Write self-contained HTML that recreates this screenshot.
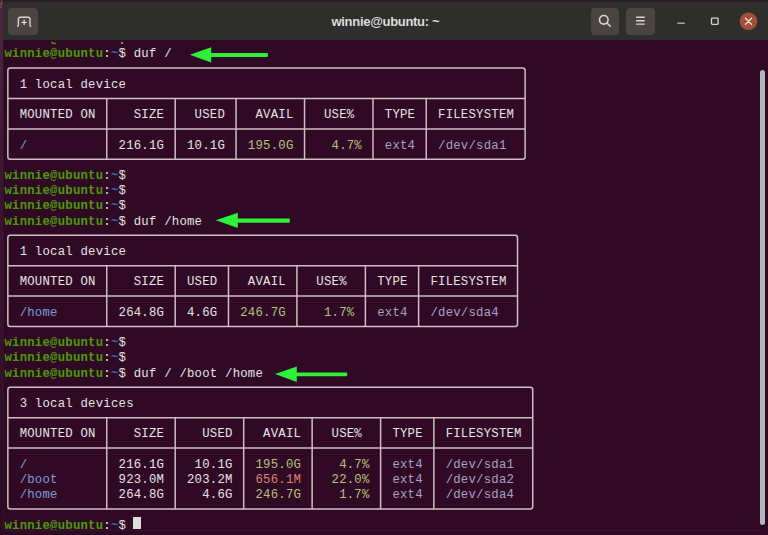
<!DOCTYPE html>
<html><head><meta charset="utf-8"><style>
html,body{margin:0;padding:0;width:768px;height:535px;overflow:hidden;background:#300a24}
#w{position:absolute;left:0;top:0;width:768px;height:535px;overflow:hidden;background:#300a24}
.t{position:absolute;font-family:"Liberation Mono",monospace;font-size:12.3px;letter-spacing:0.227px;line-height:15.2px;height:15.2px;white-space:pre}
.b{font-weight:bold}
.hl{position:absolute;height:1.5px;background:#cdbec3}
.vl{position:absolute;width:1.5px;background:#cdbec3}
.box{position:absolute;box-sizing:border-box;border:1.5px solid #cdbec3;border-radius:3px}
.hb{position:absolute;top:8px;height:27px;background:#4a4542;border-radius:4px}
</style></head><body><div id="w">
<div style="position:absolute;left:760.3px;top:69.8px;width:5.2px;height:455px;background:#b5b6b8;border-radius:3px"></div>
<svg style="position:absolute;left:0;top:0" width="768" height="535" viewBox="0 0 768 535"><g fill="none" stroke="#cdbec3" stroke-width="1.5"><rect x="7.85" y="68.10" width="517.28" height="91.20" rx="2.5"/><path d="M7.85 98.50H525.13"/><path d="M7.85 128.90H525.13"/><path d="M106.74 98.50V159.30"/><path d="M175.21 98.50V159.30"/><path d="M236.06 98.50V159.30"/><path d="M304.53 98.50V159.30"/><path d="M372.99 98.50V159.30"/><path d="M426.24 98.50V159.30"/><rect x="7.85" y="235.30" width="509.67" height="91.20" rx="2.5"/><path d="M7.85 265.70H517.52"/><path d="M7.85 296.10H517.52"/><path d="M106.74 265.70V326.50"/><path d="M175.21 265.70V326.50"/><path d="M228.46 265.70V326.50"/><path d="M296.92 265.70V326.50"/><path d="M365.38 265.70V326.50"/><path d="M418.63 265.70V326.50"/><rect x="7.85" y="387.30" width="524.88" height="121.60" rx="2.5"/><path d="M7.85 417.70H532.74"/><path d="M7.85 448.10H532.74"/><path d="M106.74 417.70V508.90"/><path d="M175.21 417.70V508.90"/><path d="M243.67 417.70V508.90"/><path d="M312.13 417.70V508.90"/><path d="M380.60 417.70V508.90"/><path d="M433.85 417.70V508.90"/></g></svg>
<div class="t b" style="left:4.45px;top:47.30px;color:#4e9a06">winnie@ubuntu</div><div class="t" style="left:103.34px;top:47.30px;color:#e6e3e6">:</div><div class="t b" style="left:110.95px;top:47.30px;color:#3f68b0">~</div><div class="t" style="left:118.56px;top:47.30px;color:#e6e3e6">$ duf /</div><div class="t" style="left:19.66px;top:77.70px;color:#e6e3e6">1 local device</div><div class="t" style="left:19.66px;top:108.10px;color:#e6e3e6">MOUNTED ON</div><div class="t" style="left:133.77px;top:108.10px;color:#e6e3e6">SIZE</div><div class="t" style="left:194.62px;top:108.10px;color:#e6e3e6">USED</div><div class="t" style="left:255.48px;top:108.10px;color:#e6e3e6">AVAIL</div><div class="t" style="left:323.94px;top:108.10px;color:#e6e3e6">USE%</div><div class="t" style="left:384.80px;top:108.10px;color:#e6e3e6">TYPE</div><div class="t" style="left:438.05px;top:108.10px;color:#e6e3e6">FILESYSTEM</div><div class="t" style="left:19.66px;top:138.50px;color:#7f9bd9">/</div><div class="t" style="left:118.56px;top:138.50px;color:#e6e3e6">216.1G</div><div class="t" style="left:187.02px;top:138.50px;color:#e6e3e6">10.1G</div><div class="t" style="left:247.87px;top:138.50px;color:#b4c27e">195.0G</div><div class="t" style="left:331.55px;top:138.50px;color:#b4c27e">4.7%</div><div class="t" style="left:384.80px;top:138.50px;color:#a6a3c6">ext4</div><div class="t" style="left:438.05px;top:138.50px;color:#a6a3c6">/dev/sda1</div><div class="t b" style="left:4.45px;top:168.90px;color:#4e9a06">winnie@ubuntu</div><div class="t" style="left:103.34px;top:168.90px;color:#e6e3e6">:</div><div class="t b" style="left:110.95px;top:168.90px;color:#3f68b0">~</div><div class="t" style="left:118.56px;top:168.90px;color:#e6e3e6">$</div><div class="t b" style="left:4.45px;top:184.10px;color:#4e9a06">winnie@ubuntu</div><div class="t" style="left:103.34px;top:184.10px;color:#e6e3e6">:</div><div class="t b" style="left:110.95px;top:184.10px;color:#3f68b0">~</div><div class="t" style="left:118.56px;top:184.10px;color:#e6e3e6">$</div><div class="t b" style="left:4.45px;top:199.30px;color:#4e9a06">winnie@ubuntu</div><div class="t" style="left:103.34px;top:199.30px;color:#e6e3e6">:</div><div class="t b" style="left:110.95px;top:199.30px;color:#3f68b0">~</div><div class="t" style="left:118.56px;top:199.30px;color:#e6e3e6">$</div><div class="t b" style="left:4.45px;top:214.50px;color:#4e9a06">winnie@ubuntu</div><div class="t" style="left:103.34px;top:214.50px;color:#e6e3e6">:</div><div class="t b" style="left:110.95px;top:214.50px;color:#3f68b0">~</div><div class="t" style="left:118.56px;top:214.50px;color:#e6e3e6">$ duf /home</div><div class="t" style="left:19.66px;top:244.90px;color:#e6e3e6">1 local device</div><div class="t" style="left:19.66px;top:275.30px;color:#e6e3e6">MOUNTED ON</div><div class="t" style="left:133.77px;top:275.30px;color:#e6e3e6">SIZE</div><div class="t" style="left:187.02px;top:275.30px;color:#e6e3e6">USED</div><div class="t" style="left:247.87px;top:275.30px;color:#e6e3e6">AVAIL</div><div class="t" style="left:316.34px;top:275.30px;color:#e6e3e6">USE%</div><div class="t" style="left:377.19px;top:275.30px;color:#e6e3e6">TYPE</div><div class="t" style="left:430.44px;top:275.30px;color:#e6e3e6">FILESYSTEM</div><div class="t" style="left:19.66px;top:305.70px;color:#7f9bd9">/home</div><div class="t" style="left:118.56px;top:305.70px;color:#e6e3e6">264.8G</div><div class="t" style="left:187.02px;top:305.70px;color:#e6e3e6">4.6G</div><div class="t" style="left:240.27px;top:305.70px;color:#b4c27e">246.7G</div><div class="t" style="left:323.94px;top:305.70px;color:#b4c27e">1.7%</div><div class="t" style="left:377.19px;top:305.70px;color:#a6a3c6">ext4</div><div class="t" style="left:430.44px;top:305.70px;color:#a6a3c6">/dev/sda4</div><div class="t b" style="left:4.45px;top:336.10px;color:#4e9a06">winnie@ubuntu</div><div class="t" style="left:103.34px;top:336.10px;color:#e6e3e6">:</div><div class="t b" style="left:110.95px;top:336.10px;color:#3f68b0">~</div><div class="t" style="left:118.56px;top:336.10px;color:#e6e3e6">$</div><div class="t b" style="left:4.45px;top:351.30px;color:#4e9a06">winnie@ubuntu</div><div class="t" style="left:103.34px;top:351.30px;color:#e6e3e6">:</div><div class="t b" style="left:110.95px;top:351.30px;color:#3f68b0">~</div><div class="t" style="left:118.56px;top:351.30px;color:#e6e3e6">$</div><div class="t b" style="left:4.45px;top:366.50px;color:#4e9a06">winnie@ubuntu</div><div class="t" style="left:103.34px;top:366.50px;color:#e6e3e6">:</div><div class="t b" style="left:110.95px;top:366.50px;color:#3f68b0">~</div><div class="t" style="left:118.56px;top:366.50px;color:#e6e3e6">$ duf / /boot /home</div><div class="t" style="left:19.66px;top:396.90px;color:#e6e3e6">3 local devices</div><div class="t" style="left:19.66px;top:427.30px;color:#e6e3e6">MOUNTED ON</div><div class="t" style="left:133.77px;top:427.30px;color:#e6e3e6">SIZE</div><div class="t" style="left:202.23px;top:427.30px;color:#e6e3e6">USED</div><div class="t" style="left:263.09px;top:427.30px;color:#e6e3e6">AVAIL</div><div class="t" style="left:331.55px;top:427.30px;color:#e6e3e6">USE%</div><div class="t" style="left:392.41px;top:427.30px;color:#e6e3e6">TYPE</div><div class="t" style="left:445.66px;top:427.30px;color:#e6e3e6">FILESYSTEM</div><div class="t" style="left:19.66px;top:457.70px;color:#7f9bd9">/</div><div class="t" style="left:118.56px;top:457.70px;color:#e6e3e6">216.1G</div><div class="t" style="left:194.62px;top:457.70px;color:#e6e3e6">10.1G</div><div class="t" style="left:255.48px;top:457.70px;color:#b4c27e">195.0G</div><div class="t" style="left:339.16px;top:457.70px;color:#b4c27e">4.7%</div><div class="t" style="left:392.41px;top:457.70px;color:#a6a3c6">ext4</div><div class="t" style="left:445.66px;top:457.70px;color:#a6a3c6">/dev/sda1</div><div class="t" style="left:19.66px;top:472.90px;color:#7f9bd9">/boot</div><div class="t" style="left:118.56px;top:472.90px;color:#e6e3e6">923.0M</div><div class="t" style="left:187.02px;top:472.90px;color:#e6e3e6">203.2M</div><div class="t" style="left:255.48px;top:472.90px;color:#d98572">656.1M</div><div class="t" style="left:331.55px;top:472.90px;color:#b4c27e">22.0%</div><div class="t" style="left:392.41px;top:472.90px;color:#a6a3c6">ext4</div><div class="t" style="left:445.66px;top:472.90px;color:#a6a3c6">/dev/sda2</div><div class="t" style="left:19.66px;top:488.10px;color:#7f9bd9">/home</div><div class="t" style="left:118.56px;top:488.10px;color:#e6e3e6">264.8G</div><div class="t" style="left:202.23px;top:488.10px;color:#e6e3e6">4.6G</div><div class="t" style="left:255.48px;top:488.10px;color:#b4c27e">246.7G</div><div class="t" style="left:339.16px;top:488.10px;color:#b4c27e">1.7%</div><div class="t" style="left:392.41px;top:488.10px;color:#a6a3c6">ext4</div><div class="t" style="left:445.66px;top:488.10px;color:#a6a3c6">/dev/sda4</div><div class="t b" style="left:4.45px;top:518.50px;color:#4e9a06">winnie@ubuntu</div><div class="t" style="left:103.34px;top:518.50px;color:#e6e3e6">:</div><div class="t b" style="left:110.95px;top:518.50px;color:#3f68b0">~</div><div class="t" style="left:118.56px;top:518.50px;color:#e6e3e6">$ </div>
<div style="position:absolute;left:133.3px;top:516.7px;width:8px;height:12px;background:#dcdcdc"></div>
<svg style="position:absolute;left:0;top:0" width="200" height="50"><path d="M51.3 42.2 Q53 43.9 56.2 43.4" stroke="#4e9a06" stroke-width="1.4" fill="none"/><rect x="121.3" y="42.2" width="1.6" height="1.6" fill="#cfcad6"/></svg>
<div style="position:absolute;left:4px;top:530px;width:756px;height:1px;background:#34162c"></div>
<svg style="position:absolute;left:0;top:0" width="768" height="535" viewBox="0 0 768 535"><g fill="#2ef038"><polygon points="189.8,54.7 211.2,47.2 211.2,62.4" /><rect x="210.2" y="53.0" width="57.69999999999999" height="3.8999999999999986" rx="1" /><polygon points="215.9,220.3 237.8,212.8 237.8,228.1" /><rect x="236.8" y="218.6" width="53.0" height="4.099999999999994" rx="1" /><polygon points="275.0,374.1 296.8,366.5 296.8,381.9" /><rect x="295.8" y="372.4" width="51.39999999999998" height="3.900000000000034" rx="1" /></g></svg>
<div style="position:absolute;left:0;top:0;width:768px;height:2px;background:#2a1c26"></div>
<div style="position:absolute;left:0;top:0;width:3.2px;height:535px;background:linear-gradient(to bottom,#4b2641 0px,#4a2440 40px,#3e1230 200px,#38102c 380px,#300a24 460px)"></div><div style="position:absolute;left:3px;top:40px;width:1px;height:495px;background:#2a1428"></div><div style="position:absolute;left:1px;top:2px;width:1px;height:2px;background:#b85a3a"></div><div style="position:absolute;left:3px;top:2px;width:1px;height:1px;background:#b85a3a"></div><div style="position:absolute;left:0;top:4px;width:1px;height:1px;background:#a85238"></div><div style="position:absolute;left:1px;top:5px;width:1px;height:1px;background:#a85238"></div><div style="position:absolute;left:0;top:7px;width:1px;height:1px;background:#a85238"></div>
<div style="position:absolute;left:3.2px;top:1.8px;width:765px;height:38.7px;background:#2e2e2d"></div>
<div class="hb" style="left:8.4px;width:29.6px"></div>
<div class="hb" style="left:591px;width:28.4px"></div>
<div class="hb" style="left:626px;width:28.6px"></div>
<svg style="position:absolute;left:0;top:0" width="768" height="45" viewBox="0 0 768 45">
 <g fill="none" stroke="#d8d4d8" stroke-width="1.6" stroke-linecap="round">
  <path d="M17.6 26.3 Q18.4 26 18.4 25 V19.3 Q18.4 17.3 20.4 17.3 H28 Q30 17.3 30 19.3 V25 Q30 26 30.8 26.3" stroke-width="1.4"/>
  <path d="M22 22.4 H26.3 M24.15 20.3 V24.5" stroke-width="1.4"/>
  <circle cx="603.8" cy="19.8" r="4.3"/>
  <path d="M607 23 L610.3 26.3"/>
  <path d="M636.6 17.3 H644.2 M636.6 20.7 H644.2 M636.6 24.1 H644.2" stroke-width="1.4"/>
  <path d="M677.3 23.2 H684.8" stroke-width="1.2" stroke-linecap="butt" stroke="#c8c4c8"/>
  <rect x="711.5" y="18.1" width="6.6" height="6.3" rx="0.8" stroke-width="1.3"/>
 </g>
 <circle cx="748.5" cy="21.3" r="8.8" fill="#a24f3c"/>
 <path d="M745.4 18.2 L751.6 24.4 M751.6 18.2 L745.4 24.4" stroke="#f0e8e4" stroke-width="1.3" stroke-linecap="round"/>
</svg>
<div style="position:absolute;left:331.5px;top:11.8px;width:120px;height:20px;font-family:'Liberation Sans',sans-serif;font-weight:bold;font-size:13px;letter-spacing:-0.3px;line-height:20px;color:#dedcdc;white-space:pre">winnie@ubuntu: ~</div>
</div></body></html>
